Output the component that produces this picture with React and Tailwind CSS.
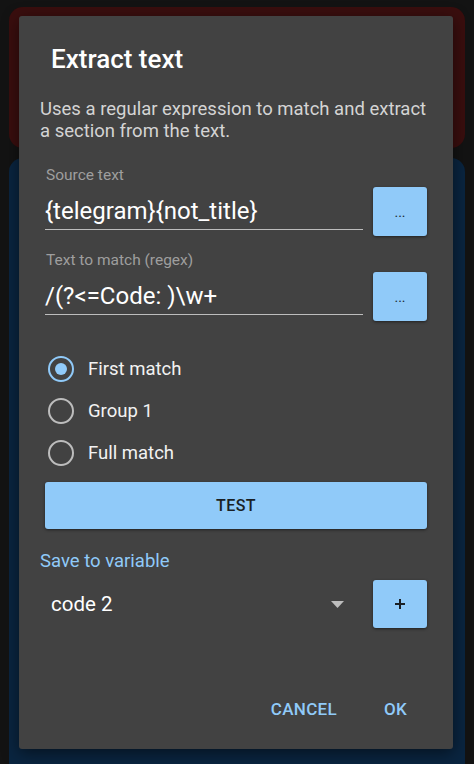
import React from "react";

function Field({ label, value }) {
  return (
    <div className="mx-[26px]">
      <div className="pl-[1px] text-[15.5px] leading-[18px] text-[#9e9e9e]">{label}</div>
      <div className="mt-[3px] flex gap-[10px]">
        <div className="flex h-[43px] flex-1 items-end border-b-[1.5px] border-[#bdbdbd] pb-[3px]">
          <span className="text-[24px] leading-[30px] text-white">{value}</span>
        </div>
        <button className="flex h-[49px] w-[54px] items-center justify-center rounded-[3px] bg-[#90caf9] text-[14px] leading-none text-[#1c2a36] shadow-[0_1px_3px_rgba(0,0,0,0.5)]">
          ...
        </button>
      </div>
    </div>
  );
}

function Radio({ label, checked }) {
  return (
    <div className="flex h-[42px] items-center pl-[29px]">
      {checked ? (
        <span className="flex h-[26px] w-[26px] items-center justify-center rounded-full border-[2.5px] border-[#90caf9]">
          <span className="h-[12px] w-[12px] rounded-full bg-[#90caf9]" />
        </span>
      ) : (
        <span className="h-[26px] w-[26px] rounded-full border-[2.5px] border-[#bdbdbd]" />
      )}
      <span className="ml-[14px] text-[18.5px] leading-[24px] text-[#f2f2f2]">{label}</span>
    </div>
  );
}

export default function App() {
  return (
    <div className="relative h-[764px] w-[474px] overflow-hidden bg-[#131313] font-['Roboto',sans-serif]">
      {/* cards behind the dialog */}
      <div className="mx-[9px] mt-[7px] h-[141px] rounded-[14px] bg-[#3a0e0e]" />
      <div className="mx-[9px] mt-[10px] h-[640px] rounded-t-[14px] bg-[#0a2540]" />

      {/* dialog */}
      <div className="absolute left-[19px] top-[16px] flex h-[733px] w-[434px] flex-col rounded-[3px] bg-[#424242] shadow-[0_4px_16px_rgba(0,0,0,0.5)]">
        <h1 className="mt-[28px] pl-[32px] text-[26px] font-medium leading-[30px] text-white">Extract text</h1>

        <p className="mt-[24px] pl-[21px] pr-[20px] text-[18.5px] leading-[22px] text-[#d4d4d4]">
          Uses a regular expression to match and extract a section from the text.
        </p>

        <div className="mt-[24px]">
          <Field label="Source text" value="{telegram}{not_title}" />
        </div>
        <div className="mt-[15px]">
          <Field label="Text to match (regex)" value="/(?<=Code: )\w+" />
        </div>

        <div className="mt-[27px]">
          <Radio label="First match" checked />
          <Radio label="Group 1" />
          <Radio label="Full match" />
        </div>

        <button className="mx-[26px] mt-[8px] h-[47px] rounded-[3px] bg-[#90caf9] text-[16px] font-medium tracking-[0.5px] text-[#1a1f24] shadow-[0_1px_3px_rgba(0,0,0,0.5)]">
          TEST
        </button>

        <div className="mt-[21px] pl-[21px] text-[18.5px] leading-[22px] text-[#90caf9]">Save to variable</div>

        <div className="mx-[26px] mt-[8px] flex gap-[10px]">
          <div className="flex h-[48px] flex-1 items-center justify-between pl-[6px] pr-[19px]">
            <span className="text-[20.5px] leading-[26px] text-white">code 2</span>
            <svg width="13" height="7" viewBox="0 0 13 7">
              <path d="M0 0 L13 0 L6.5 7 Z" fill="#bdbdbd" />
            </svg>
          </div>
          <button className="flex h-[48px] w-[54px] items-center justify-center rounded-[3px] bg-[#90caf9] shadow-[0_1px_3px_rgba(0,0,0,0.5)]">
            <svg width="12" height="12" viewBox="0 0 12 12">
              <path d="M6 1 V11 M1 6 H11" stroke="#1a1f24" strokeWidth="2" />
            </svg>
          </button>
        </div>

        <div className="mt-auto mb-[29px] flex justify-end gap-[47px] pr-[46px]">
          <span className="text-[17px] font-medium leading-[22px] tracking-[0.3px] text-[#90caf9]">CANCEL</span>
          <span className="text-[17px] font-medium leading-[22px] tracking-[0.3px] text-[#90caf9]">OK</span>
        </div>
      </div>
    </div>
  );
}
